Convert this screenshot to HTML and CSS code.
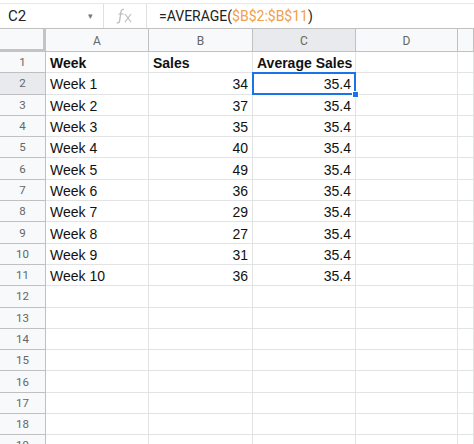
FILE: index.html
```html
<!DOCTYPE html>
<html lang="en">
<head>
  <meta charset="UTF-8">
  <title>Average Sales</title>
  <link rel="stylesheet" href="styles.css">
</head>
<body>

  <!-- formula bar -->
  <div class="formula-bar">
    <div class="name-box">
      <span>C2</span>
      <span class="caret">&#9662;</span>
    </div>
    <div class="fx">
      <svg width="20" height="18" viewBox="0 0 20 18">
        <path d="M9 2.5c-1.6-.4-2.7.4-3 2.2L4.6 13.8c-.3 1.8-1.3 2.4-3 2" fill="none" stroke="#bdbdbd" stroke-width="1.3"/>
        <path d="M3.5 7h5" stroke="#bdbdbd" stroke-width="1.2"/>
        <path d="M10 7l6 8M16 7l-6 8" stroke="#bdbdbd" stroke-width="1.2"/>
      </svg>
    </div>
    <div class="formula">=AVERAGE(<span class="ref">$B$2:$B$11</span>)</div>
  </div>

  <!-- sheet grid -->
  <div class="grid">
    <div class="corner"></div>
    <div class="col-head">A</div>
    <div class="col-head">B</div>
    <div class="col-head active">C</div>
    <div class="col-head">D</div>
    <div class="col-head"></div>

    <div class="row-head">1</div>
    <div class="cell bold">Week</div>
    <div class="cell bold">Sales</div>
    <div class="cell bold">Average Sales</div>
    <div class="cell"></div>
    <div class="cell"></div>

    <div class="row-head active">2</div>
    <div class="cell">Week 1</div>
    <div class="cell num">34</div>
    <div class="cell num selected">35.4</div>
    <div class="cell"></div>
    <div class="cell"></div>

    <div class="row-head">3</div>
    <div class="cell">Week 2</div>
    <div class="cell num">37</div>
    <div class="cell num">35.4</div>
    <div class="cell"></div>
    <div class="cell"></div>

    <div class="row-head">4</div>
    <div class="cell">Week 3</div>
    <div class="cell num">35</div>
    <div class="cell num">35.4</div>
    <div class="cell"></div>
    <div class="cell"></div>

    <div class="row-head">5</div>
    <div class="cell">Week 4</div>
    <div class="cell num">40</div>
    <div class="cell num">35.4</div>
    <div class="cell"></div>
    <div class="cell"></div>

    <div class="row-head">6</div>
    <div class="cell">Week 5</div>
    <div class="cell num">49</div>
    <div class="cell num">35.4</div>
    <div class="cell"></div>
    <div class="cell"></div>

    <div class="row-head">7</div>
    <div class="cell">Week 6</div>
    <div class="cell num">36</div>
    <div class="cell num">35.4</div>
    <div class="cell"></div>
    <div class="cell"></div>

    <div class="row-head">8</div>
    <div class="cell">Week 7</div>
    <div class="cell num">29</div>
    <div class="cell num">35.4</div>
    <div class="cell"></div>
    <div class="cell"></div>

    <div class="row-head">9</div>
    <div class="cell">Week 8</div>
    <div class="cell num">27</div>
    <div class="cell num">35.4</div>
    <div class="cell"></div>
    <div class="cell"></div>

    <div class="row-head">10</div>
    <div class="cell">Week 9</div>
    <div class="cell num">31</div>
    <div class="cell num">35.4</div>
    <div class="cell"></div>
    <div class="cell"></div>

    <div class="row-head">11</div>
    <div class="cell">Week 10</div>
    <div class="cell num">36</div>
    <div class="cell num">35.4</div>
    <div class="cell"></div>
    <div class="cell"></div>

    <div class="row-head">12</div>
    <div class="cell"></div><div class="cell"></div><div class="cell"></div><div class="cell"></div><div class="cell"></div>
    <div class="row-head">13</div>
    <div class="cell"></div><div class="cell"></div><div class="cell"></div><div class="cell"></div><div class="cell"></div>
    <div class="row-head">14</div>
    <div class="cell"></div><div class="cell"></div><div class="cell"></div><div class="cell"></div><div class="cell"></div>
    <div class="row-head">15</div>
    <div class="cell"></div><div class="cell"></div><div class="cell"></div><div class="cell"></div><div class="cell"></div>
    <div class="row-head">16</div>
    <div class="cell"></div><div class="cell"></div><div class="cell"></div><div class="cell"></div><div class="cell"></div>
    <div class="row-head">17</div>
    <div class="cell"></div><div class="cell"></div><div class="cell"></div><div class="cell"></div><div class="cell"></div>
    <div class="row-head">18</div>
    <div class="cell"></div><div class="cell"></div><div class="cell"></div><div class="cell"></div><div class="cell"></div>
    <div class="row-head">19</div>
    <div class="cell"></div><div class="cell"></div><div class="cell"></div><div class="cell"></div><div class="cell"></div>
  </div>

</body>
</html>
```

FILE: styles.css
```css
html, body {
  margin: 0;
  padding: 0;
  height: 444px;
  overflow: hidden;
  background-color: #fff;
}

body {
  font-family: 'Liberation Sans', Arial, sans-serif;
  color: #222;
}

/* formula bar */

.formula-bar {
  display: flex;
  align-items: center;
  height: 24px;
  margin-top: 3px;
  border-top: 1px solid #e8e8e8;
  font-family: Roboto, 'Liberation Sans', sans-serif;
  font-size: 14px;
  color: #222;
}

.name-box {
  display: flex;
  align-items: center;
  justify-content: space-between;
  width: 104px;
  padding: 0 8px 0 8px;
  box-sizing: border-box;
  height: 100%;
  border-right: 1px solid #e0e0e0;
  font-size: 15px;
}

.caret {
  font-size: 9px;
  color: #777;
  margin-right: 2px;
}

.fx {
  display: flex;
  align-items: center;
  justify-content: center;
  width: 42px;
  height: 100%;
  border-right: 1px solid #e0e0e0;
}

.formula {
  padding-left: 12px;
}

.formula .ref {
  color: #f0a04a;
}

/* grid */

.grid {
  display: grid;
  grid-template-columns: 46px 103px 104px 103px 102px 1fr;
  grid-template-rows: 24px;
  grid-auto-rows: 21.3px;
}

.corner {
  background-color: #f8f9fa;
  border-top: 1px solid #c0c0c0;
  border-right: 3px solid #c4c4c4;
  border-bottom: 3px solid #c4c4c4;
  box-sizing: border-box;
}

.col-head {
  display: flex;
  align-items: center;
  justify-content: center;
  background-color: #f8f9fa;
  border-top: 1px solid #c0c0c0;
  border-right: 1px solid #c0c0c0;
  border-bottom: 1px solid #c0c0c0;
  box-sizing: border-box;
  font-family: Roboto, 'Liberation Sans', sans-serif;
  font-size: 12px;
  color: #666;
  padding-top: 2px;
}

.col-head.active,
.row-head.active {
  background-color: #e8eaed;
}

.row-head {
  display: flex;
  align-items: center;
  justify-content: center;
  background-color: #f8f9fa;
  border-right: 1px solid #c0c0c0;
  border-bottom: 1px solid #c0c0c0;
  box-sizing: border-box;
  font-family: Roboto, 'Liberation Sans', sans-serif;
  font-size: 11.5px;
  color: #666;
}

.cell {
  display: flex;
  align-items: center;
  padding: 2px 4px 0 4px;
  border-right: 1px solid #e2e3e3;
  border-bottom: 1px solid #e2e3e3;
  box-sizing: border-box;
  font-size: 14px;
  color: #111;
  white-space: nowrap;
  position: relative;
}

.cell.bold {
  font-weight: bold;
}

.cell.num {
  justify-content: flex-end;
}

.cell.selected::after {
  content: '';
  position: absolute;
  top: -1px;
  left: -1px;
  right: -1px;
  bottom: -1px;
  border: 2px solid #1a73e8;
}

.cell.selected::before {
  content: '';
  position: absolute;
  right: -4px;
  bottom: -4px;
  width: 5px;
  height: 5px;
  background-color: #1a73e8;
  border: 1px solid #fff;
  z-index: 2;
}
```
